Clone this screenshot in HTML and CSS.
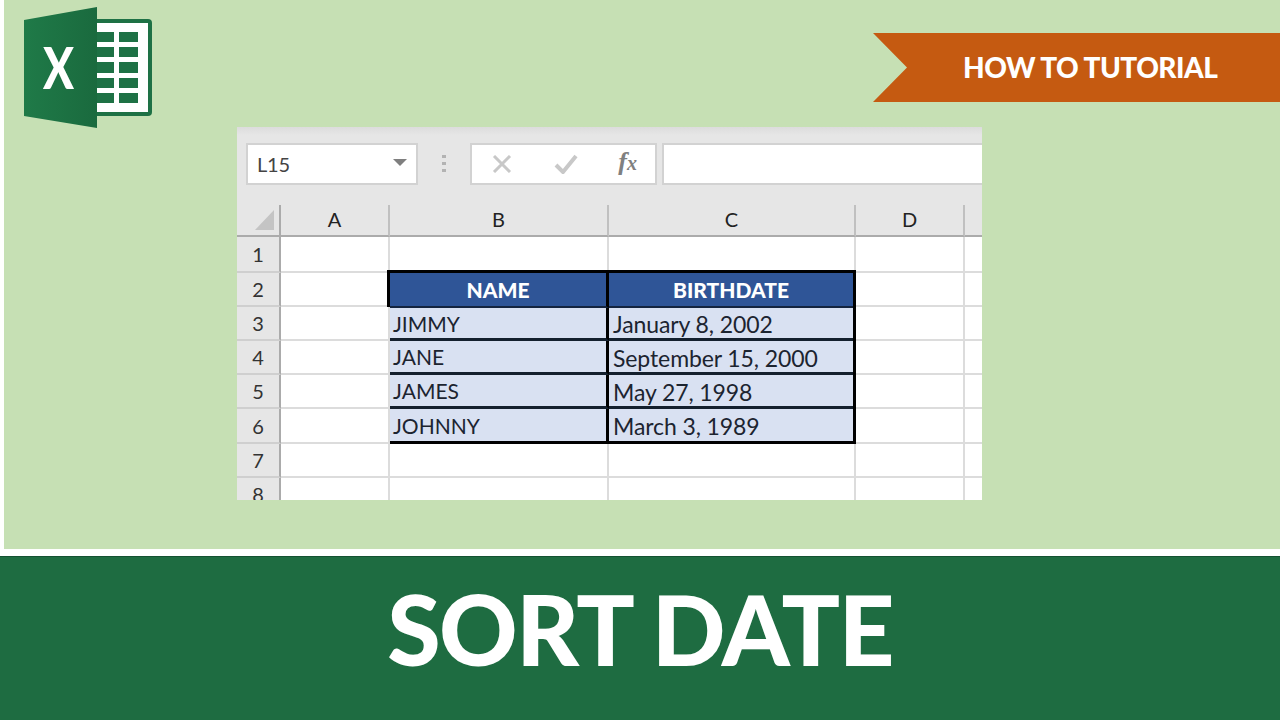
FILE: index.html
```html
<!DOCTYPE html>
<html lang="en">
<head>
<meta charset="utf-8">
<title>Sort Date</title>
<link rel="stylesheet" href="styles.css">
</head>
<body>
<main class="page">
  <section class="hero">
    <div class="top">
      <svg class="logo" width="128" height="121" viewBox="24 7 128 121" aria-label="Excel">
        <defs>
          <linearGradient id="cover" x1="0" x2="1" y1="0" y2="0">
            <stop offset="0" stop-color="#1f7a48"/><stop offset="1" stop-color="#1a6a3e"/>
          </linearGradient>
        </defs>
        <rect x="90" y="19" width="62" height="97" rx="4" fill="#1e7145"/>
        <rect x="96" y="23" width="52" height="89" fill="#fff"/>
        <g fill="#1e7145">
          <rect x="119" y="32" width="19" height="10"/><rect x="119" y="47" width="19" height="10"/>
          <rect x="119" y="62" width="19" height="11"/><rect x="119" y="78" width="19" height="10"/>
          <rect x="119" y="93" width="19" height="10"/>
          <rect x="96" y="32" width="18" height="10"/><rect x="96" y="47" width="18" height="10"/>
          <rect x="96" y="62" width="18" height="11"/><rect x="96" y="78" width="18" height="10"/>
          <rect x="96" y="93" width="18" height="10"/>
        </g>
        <polygon points="24,20 97,7 97,128 24,116" fill="url(#cover)"/>
        <text class="logo-x" x="43" y="89" textLength="31" lengthAdjust="spacingAndGlyphs">X</text>
      </svg>
      <div class="ribbon">HOW TO TUTORIAL</div>
    </div>
    <div class="sheet">
      <div class="bar">
        <div class="box namebox"><span class="cellref">L15</span><span class="caret"></span></div>
        <svg class="dots" width="6" height="18" viewBox="0 0 6 18"><g fill="#b3b3b3"><rect x="1" y="0" width="4" height="3"/><rect x="1" y="7" width="4" height="3"/><rect x="1" y="14" width="4" height="3"/></g></svg>
        <div class="box fxbox">
          <svg width="20" height="18" viewBox="0 0 20 18"><path d="M2 1 18 17M18 1 2 17" stroke="#c8c8c8" stroke-width="3" fill="none"/></svg>
          <svg class="check" width="24" height="20" viewBox="0 0 24 20"><path d="M2 11 9 18 22 2" stroke="#c8c8c8" stroke-width="4" fill="none"/></svg>
          <span class="fx">f<small>x</small></span>
        </div>
        <div class="box formula"></div>
      </div>
      <div class="grid">
        <div class="corner"><span class="tri"></span></div>
        <div class="colhead">A</div><div class="colhead">B</div><div class="colhead">C</div><div class="colhead">D</div><div class="colhead"></div>

        <div class="rowhead">1</div><div class="cell"></div><div class="cell"></div><div class="cell"></div><div class="cell"></div><div class="cell"></div>

        <div class="rowhead">2</div><div class="cell"></div>
        <div class="table">
          <div class="th">NAME</div><div class="th">BIRTHDATE</div>
          <div class="td">JIMMY</div><div class="td date">January 8, 2002</div>
          <div class="td">JANE</div><div class="td date">September 15, 2000</div>
          <div class="td">JAMES</div><div class="td date">May 27, 1998</div>
          <div class="td">JOHNNY</div><div class="td date">March 3, 1989</div>
        </div>
        <div class="cell"></div><div class="cell"></div>

        <div class="rowhead">3</div><div class="cell"></div><div class="cell"></div><div class="cell"></div>
        <div class="rowhead">4</div><div class="cell"></div><div class="cell"></div><div class="cell"></div>
        <div class="rowhead">5</div><div class="cell"></div><div class="cell"></div><div class="cell"></div>
        <div class="rowhead">6</div><div class="cell"></div><div class="cell"></div><div class="cell"></div>

        <div class="rowhead">7</div><div class="cell"></div><div class="cell"></div><div class="cell"></div><div class="cell"></div><div class="cell"></div>
        <div class="rowhead">8</div><div class="cell"></div><div class="cell"></div><div class="cell"></div><div class="cell"></div><div class="cell"></div>
      </div>
    </div>
  </section>
  <footer class="banner"><h1>SORT DATE</h1></footer>
</main>
</body>
</html>
```
FILE: styles.css
```css
* { box-sizing: border-box; }
html, body { margin: 0; padding: 0; }
body { width: 1280px; height: 720px; overflow: hidden; background: #fff; font-family: Lato, "Liberation Sans", sans-serif; }
.page { display: flex; flex-direction: column; height: 720px; }
.hero { height: 549px; margin-left: 4px; background: #c6e0b4; padding: 7px 0 0 20px; }
.top { display: flex; justify-content: space-between; align-items: flex-start; height: 120px; }
.logo { display: block; flex: none; }
.logo-x { font-family: Lato, sans-serif; font-weight: 900; font-size: 58px; fill: #fff; }
.ribbon { width: 407px; height: 69px; margin-top: 26px; background: #c55a11; color: #fff; font-weight: 900; font-size: 28px; letter-spacing: -0.5px; line-height: 69px; padding-left: 90px; white-space: nowrap; clip-path: polygon(0 0, 100% 0, 100% 100%, 0 100%, 34px 50%); }

.sheet { width: 745px; height: 373px; margin-left: 213px; background: #fff; overflow: hidden; }
.bar { height: 78px; background: linear-gradient(#dcdcdc, #e6e6e6 8px); padding: 16px 0 0 9px; display: flex; align-items: flex-start; }
.box { height: 42px; background: #fff; border: 2px solid #d2d2d2; }
.namebox { width: 172px; display: flex; align-items: center; justify-content: space-between; padding: 0 9px 0 9px; }
.cellref { font-size: 20px; letter-spacing: -0.2px; color: #444; }
.caret { width: 0; height: 0; border-left: 7px solid transparent; border-right: 7px solid transparent; border-top: 7px solid #7f7f7f; margin-top: -4px; }
.dots { margin: 12px 23px 0 23px; flex: none; }
.fxbox { width: 187px; display: flex; align-items: center; padding: 0 18px 0 20px; justify-content: space-between; }
.check { margin-left: 2px; }
.fx { font-family: "Liberation Serif", serif; font-style: italic; font-weight: 700; font-size: 26px; color: #808080; line-height: 1; margin-top: -4px; }
.fx small { font-size: 20px; }
.formula { flex: 1; margin-left: 5px; border-right: 0; }

.grid { display: grid; grid-template-columns: 44px 109px 219px 247px 109px 30px; grid-template-rows: 32px 36px 34px 34px 34px 34px 35px 34px 34px; }
.corner, .colhead { background: #e6e6e6; border-bottom: 2px solid #ababab; }
.corner { border-right: 2px solid #ababab; position: relative; }
.tri { position: absolute; left: 18px; top: 5px; width: 19px; height: 20px; background: #c4c4c4; clip-path: polygon(100% 0, 100% 100%, 0 100%); }
.colhead { font-size: 20px; color: #222; text-align: center; line-height: 29px; border-right: 2px solid #c0c0c0; }
.rowhead { display: flex; align-items: center; justify-content: center; background: #e6e6e6; border-right: 2px solid #ababab; border-bottom: 2px solid #cfcfcf; font-size: 20px; color: #333; }
.cell { border-right: 2px solid #dcdcdc; border-bottom: 2px solid #dcdcdc; background: #fff; }
.table { grid-column: span 2; grid-row: span 5; display: grid; grid-template-columns: 219px 1fr; grid-template-rows: 35px 33px 34px 34px 32px; margin: -3px 0 0 -3px; border: 3px solid #000; background: #000; }
.th, .td { display: flex; align-items: center; font-size: 21px; overflow: hidden; white-space: nowrap; border-right: 3px solid #000; }
.th { justify-content: center; background: #2f5597; color: #fff; font-weight: 900; border-bottom: 2px solid #14243f; }
.th:nth-child(2n), .td:nth-child(2n) { border-right: 0; }
.td { background: #d9e1f2; color: #1c2430; padding-left: 3px; border-bottom: 3px solid #14202e; }
.td.date { font-size: 23px; letter-spacing: -0.1px; padding: 2px 0 0 4px; }
.td:nth-last-child(-n+2) { border-bottom: 0; }

.banner { margin-top: 7px; flex: 1; background: #1e6c41; border-top: 1px solid #145232; display: flex; align-items: center; justify-content: center; }
.banner h1 { margin: 0 0 20px 0; color: #fff; font-weight: 900; font-size: 97px; line-height: 1; letter-spacing: -1.5px; }
```
